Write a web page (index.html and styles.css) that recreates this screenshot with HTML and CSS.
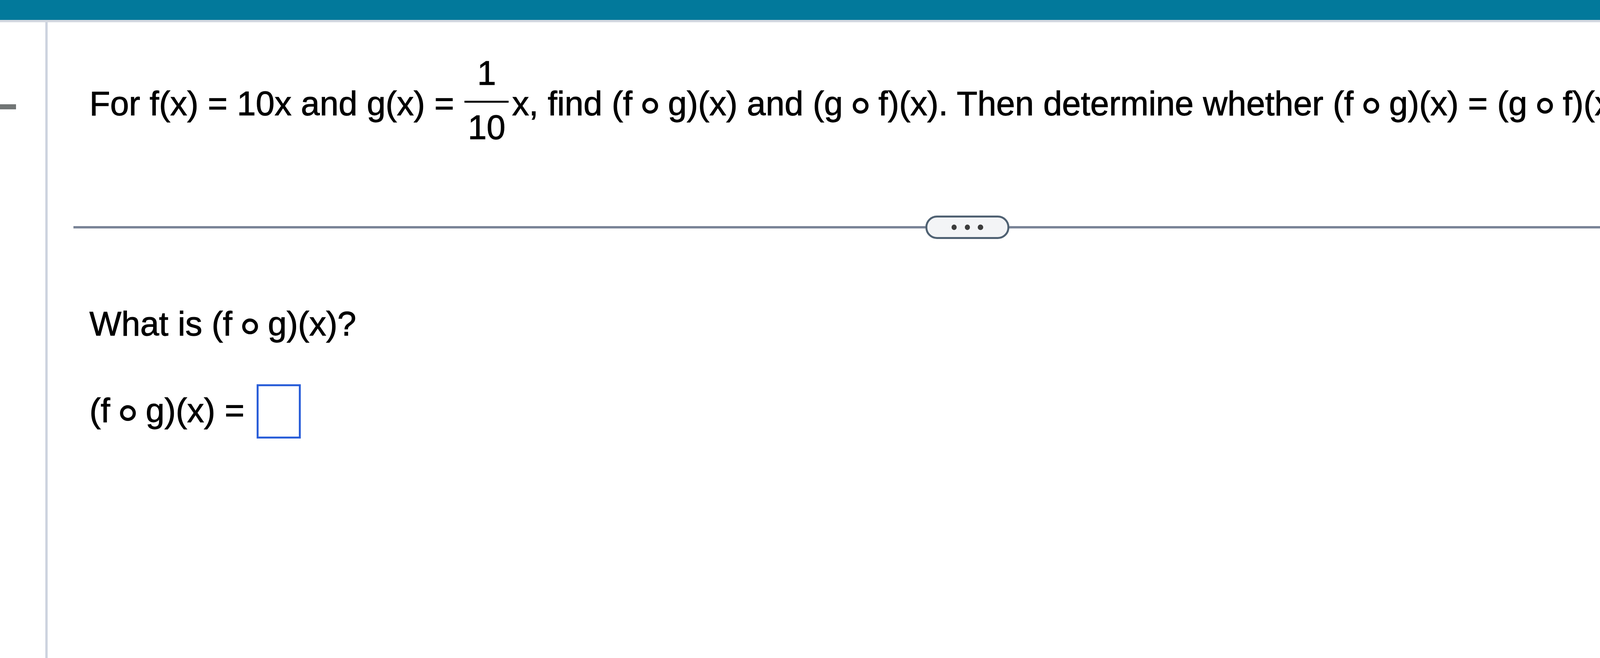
FILE: index.html
```html
<!DOCTYPE html>
<html lang="en">
<head>
  <meta charset="UTF-8">
  <title>Composition of Functions</title>
  <meta name="viewport" content="width=device-width, initial-scale=1.0">
  <link rel="stylesheet" href="styles.css">
</head>
<body>
  <header class="topbar"></header>

  <div class="main">
    <aside class="sidebar">
      <div class="dash"></div>
    </aside>

    <section class="content">
      <p class="question">For f(x) = 10x and g(x) = <span class="frac"><span class="num">1</span><span class="den">10</span></span>x, find (f <span class="op">∘</span> g)(x) and (g <span class="op">∘</span> f)(x). Then determine whether (f <span class="op">∘</span> g)(x) = (g <span class="op">∘</span> f)(x).</p>

      <div class="divider">
        <span class="rule"></span>
        <div class="more"><i></i><i></i><i></i></div>
        <span class="rule"></span>
      </div>

      <p class="prompt">What is (f <span class="op">∘</span> g)(x)?</p>

      <p class="answer">(f <span class="op">∘</span> g)(x) = <span class="answer-box"></span></p>
    </section>
  </div>
</body>
</html>
```

FILE: styles.css
```css
/* the page is drawn for a 4848px wide screen and scales with the window */
:root {
  --px: calc(100vw / 4848);
}

* {
  box-sizing: border-box;
}

html, body {
  overflow: hidden;
}

body {
  margin: 0;
  padding: 0;
  background: #fff;
  color: #000;
  font-family: "Liberation Sans", Arial, Helvetica, sans-serif;
  font-size: calc(102.5 * var(--px));
  -webkit-text-stroke: calc(1.5 * var(--px)) #000;
}

.topbar {
  height: calc(68 * var(--px));
  background: #02799b;
  border-bottom: calc(8 * var(--px)) solid #d3d8e0;
}

.main {
  display: flex;
  height: calc(100vh - 68 * var(--px));
}

.sidebar {
  width: calc(137 * var(--px));
  flex-shrink: 0;
  padding-top: calc(248 * var(--px));
}

.dash {
  width: calc(48 * var(--px));
  height: calc(15 * var(--px));
  background: #717575;
}

.content {
  flex: 1;
  min-width: 0;
  overflow: hidden;
  border-left: calc(8 * var(--px)) solid #cdd3df;
  padding-left: calc(79 * var(--px));
}

.question,
.prompt,
.answer {
  margin: 0;
  padding-left: calc(48 * var(--px));
  white-space: nowrap;
  line-height: calc(120 * var(--px));
}

.question {
  margin-top: calc(102 * var(--px));
}

.frac {
  display: inline-flex;
  flex-direction: column;
  align-items: center;
  vertical-align: calc(92 * var(--px));
  margin: 0 calc(10 * var(--px)) 0 calc(3 * var(--px));
  line-height: 1;
}

.num {
  padding-bottom: calc(33 * var(--px));
}

.den {
  border-top: calc(6 * var(--px)) solid #000;
  padding: calc(23 * var(--px)) calc(10 * var(--px)) 0;
}

/* composition ring */
.op {
  display: inline-flex;
  justify-content: center;
  width: calc(49 * var(--px));
  margin: 0 calc(1 * var(--px));
  font-family: "DejaVu Sans", sans-serif;
  font-size: calc(155 * var(--px));
  line-height: 0;
  vertical-align: calc(-21 * var(--px));
  -webkit-text-stroke: 0;
}

.divider {
  width: calc(5416 * var(--px));
  margin-top: calc(217 * var(--px));
  display: flex;
  align-items: center;
}

.rule {
  flex: 1;
  height: calc(7 * var(--px));
  background: #7a8497;
}

.more {
  width: calc(255 * var(--px));
  height: calc(70 * var(--px));
  border: calc(6 * var(--px)) solid #4f6172;
  border-radius: calc(35 * var(--px));
  background: #f3f4f6;
  display: flex;
  align-items: center;
  justify-content: center;
  gap: calc(24 * var(--px));
}

.more i {
  width: calc(16 * var(--px));
  height: calc(16 * var(--px));
  border-radius: 50%;
  background: #3c3c3c;
}

.prompt {
  margin-top: calc(198 * var(--px));
}

.answer {
  margin-top: calc(123 * var(--px));
}

.answer-box {
  display: inline-block;
  width: calc(134 * var(--px));
  height: calc(164 * var(--px));
  border: calc(6 * var(--px)) solid #2b5fd9;
  margin-left: calc(8 * var(--px));
  vertical-align: calc(-49 * var(--px));
}
```
